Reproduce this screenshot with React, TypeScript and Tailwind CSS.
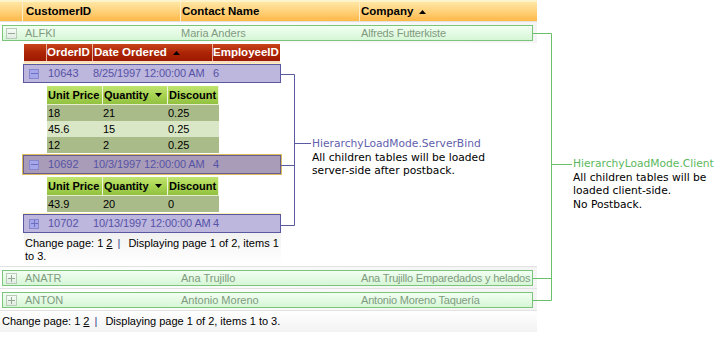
import React from "react";

const sans = "font-['Liberation_Sans',Arial,sans-serif]";
const verdana = "font-['DejaVu_Sans',Verdana,sans-serif]";

function Sign({ plus, color }: { plus?: boolean; color: string }) {
  return (
    <svg width="7" height="7" viewBox="0 0 7 7">
      <rect x="0" y="3" width="7" height="1" fill={color} />
      {plus && <rect x="3" y="0" width="1" height="7" fill={color} />}
    </svg>
  );
}

function Arrow({ down }: { down?: boolean }) {
  return (
    <svg width="7" height="4" viewBox="0 0 7 4" className="ml-[6px] shrink-0">
      <polygon points={down ? "0,0 7,0 3.5,4" : "0,4 7,4 3.5,0"} fill="#000" />
    </svg>
  );
}

function CustomerRow({ id, name, company, open }: { id: string; name: string; company: string; open?: boolean }) {
  return (
    <div className="border-t border-[#e2e2e2] pt-[3px] pb-[2px] bg-linear-to-r from-white to-[#f4f4f4]">
      <div className="ml-[2px] w-[531px] h-[16px] flex items-center overflow-hidden border border-[#7cc47c] bg-linear-to-b from-[#f2fff2] to-[#d6f6d6] text-[11px] leading-[14px] text-[#7f9b7f]">
        <div className="w-[21px] shrink-0 pl-[3px] flex items-center">
          <div className="w-[11px] h-[11px] border border-[#b8ccb8] bg-linear-to-b from-[#f6fbf6] to-[#e2ece2] flex items-center justify-center">
            <Sign plus={!open} color="#93a993" />
          </div>
        </div>
        <div className="w-[157px] shrink-0 pl-[1px] whitespace-nowrap">{id}</div>
        <div className="w-[180px] shrink-0 whitespace-nowrap">{name}</div>
        <div className="whitespace-nowrap tracking-[-0.2px]">{company}</div>
      </div>
    </div>
  );
}

function OrderRow({ id, date, emp, open, selected }: { id: string; date: string; emp: string; open?: boolean; selected?: boolean }) {
  return (
    <div className="border-t border-[#fff0b4]">
      <div
        className={`h-[19px] flex items-center border text-[11px] text-[#5653a6] ${
          selected ? "border-[#6a5c8f] bg-[#a99cb8] shadow-[0_0_0_1px_#d9bd5e]" : "border-[#5a58a0] bg-[#bdb6dd]"
        }`}
      >
        <div className="w-[22px] shrink-0 pl-[5px] flex items-center">
          <div className="w-[10px] h-[10px] border border-[#8686cc] bg-[#a6a6ea] flex items-center justify-center">
            <Sign plus={!open} color="#6e6ec0" />
          </div>
        </div>
        <div className="w-[46px] shrink-0 pl-[2px] whitespace-nowrap">{id}</div>
        <div className="w-[120px] shrink-0 pl-[1px] whitespace-nowrap tracking-[-0.1px]">{date}</div>
        <div className="pl-[1px]">{emp}</div>
      </div>
    </div>
  );
}

function Details({ rows }: { rows: string[][] }) {
  return (
    <div className="ml-[24px] w-[172px] pt-[3px] pb-[1px]">
      <div className="h-[19px] flex border-b border-[#e6f0cc] bg-linear-to-b from-[#c0e470] via-[#a8d452] to-[#92c040] font-bold text-[11px] text-black">
        <div className="w-[55px] shrink-0 pl-[1px] flex items-center">Unit Price</div>
        <div className="w-[65px] shrink-0 border-l border-[#eef4dc] pl-[1px] flex items-center">
          Quantity
          <Arrow down />
        </div>
        <div className="flex-1 border-l border-r border-[#eef4dc] pl-[1px] flex items-center">Discount</div>
      </div>
      {rows.map((r, i) => (
        <div key={i} className={`h-[16px] flex items-center text-[11px] text-black ${i % 2 ? "bg-[#dae7c7]" : "bg-[#aabb8a]"}`}>
          <div className="w-[55px] shrink-0 pl-[1px]">{r[0]}</div>
          <div className="w-[65px] shrink-0 pl-[1px]">{r[1]}</div>
          <div className="pl-[1px]">{r[2]}</div>
        </div>
      ))}
    </div>
  );
}

function Pager({ tail }: { tail: string }) {
  return (
    <div className="whitespace-nowrap">
      Change page: 1 <span className="underline">2</span>
      <span className="mx-[5px] text-[#334488]">|</span> Displaying page 1 of 2, items 1{tail}
    </div>
  );
}

export default function App() {
  return (
    <div className={`relative w-[718px] h-[342px] bg-white overflow-hidden ${sans}`}>
      <div className="flex">
        <div className="w-[537px] shrink-0">
          <div className="h-[21px] flex border-t-2 border-[#fff3cc] bg-linear-to-b from-[#ffe7a4] via-[#ffd17a] to-[#ffb845] font-bold text-[11.5px] text-black">
            <div className="w-[22px] shrink-0" />
            <div className="w-[158px] shrink-0 border-l border-[#fcedc8] pl-[3px] flex items-center">CustomerID</div>
            <div className="w-[179px] shrink-0 border-l border-[#fcedc8] pl-[1px] flex items-center">Contact Name</div>
            <div className="flex-1 border-l border-[#fcedc8] pl-[1px] flex items-center">
              Company
              <Arrow />
            </div>
          </div>

          <CustomerRow id="ALFKI" name="Maria Anders" company="Alfreds Futterkiste" open />

          <div className="flex pb-[3px]">
            <div className="ml-[23px] w-[258px] shrink-0">
              <div className="mt-[1px] ml-[1px] w-[256px] h-[19px] flex border-b-2 border-[#f7dcc6] bg-linear-to-b from-[#c9441a] via-[#ad2506] to-[#9c1a00] font-bold text-[11.5px] text-white">
                <div className="w-[22px] shrink-0" />
                <div className="w-[46px] shrink-0 border-l border-[#e9b4a0] flex items-center">OrderID</div>
                <div className="w-[120px] shrink-0 border-l border-[#e9b4a0] pl-[1px] flex items-center">
                  Date Ordered
                  <Arrow />
                </div>
                <div className="flex-1 border-l border-[#e9b4a0] flex items-center">EmployeeID</div>
              </div>

              <OrderRow id="10643" date="8/25/1997 12:00:00 AM" emp="6" open />
              <Details rows={[["18", "21", "0.25"], ["45.6", "15", "0.25"], ["12", "2", "0.25"]]} />
              <OrderRow id="10692" date="10/3/1997 12:00:00 AM" emp="4" open selected />
              <Details rows={[["43.9", "20", "0"]]} />
              <OrderRow id="10702" date="10/13/1997 12:00:00 AM" emp="4" />

              <div className="ml-[1px] h-[30px] pt-[4px] pl-[1px] bg-linear-to-b from-[#f1f1f1] to-white text-[11px] leading-[13px] text-black">
                <Pager tail="" />
                <div>to 3.</div>
              </div>
            </div>

            <div className={`ml-[31px] mt-[94px] text-[10.7px] leading-[13.5px] text-black whitespace-nowrap ${verdana}`}>
              <div className="text-[#5f5fae]">HierarchyLoadMode.ServerBind</div>
              <div>All children tables will be loaded</div>
              <div>server-side after postback.</div>
            </div>
          </div>

          <CustomerRow id="ANATR" name="Ana Trujillo" company="Ana Trujillo Emparedados y helados" />
          <CustomerRow id="ANTON" name="Antonio Moreno" company="Antonio Moreno Taquería" />

          <div className="h-[22px] border-t border-[#e2e2e2] pt-[4px] pl-[2px] bg-linear-to-b from-white to-[#f2f2f2] text-[11px] leading-[13px] text-black">
            <Pager tail=" to 3." />
          </div>
        </div>

        <div className={`ml-[36px] mt-[157px] text-[10.7px] leading-[13.5px] text-black whitespace-nowrap ${verdana}`}>
          <div className="text-[#5cb85c]">HierarchyLoadMode.Client</div>
          <div>All children tables will be</div>
          <div>loaded client-side.</div>
          <div>No Postback.</div>
        </div>
      </div>

      <svg className="absolute inset-0 pointer-events-none" width="718" height="342">
        <g stroke="#5a5aa0" strokeWidth="1" fill="none">
          <path d="M281 74.5H294.5V225.5H281M281 165.5H294.5M294.5 143.5H311" />
        </g>
        <g stroke="#6abf6a" strokeWidth="1" fill="none">
          <path d="M533 33.5H551.5V300.5H533M533 278.5H551.5M551.5 164.5H572" />
        </g>
      </svg>
    </div>
  );
}
